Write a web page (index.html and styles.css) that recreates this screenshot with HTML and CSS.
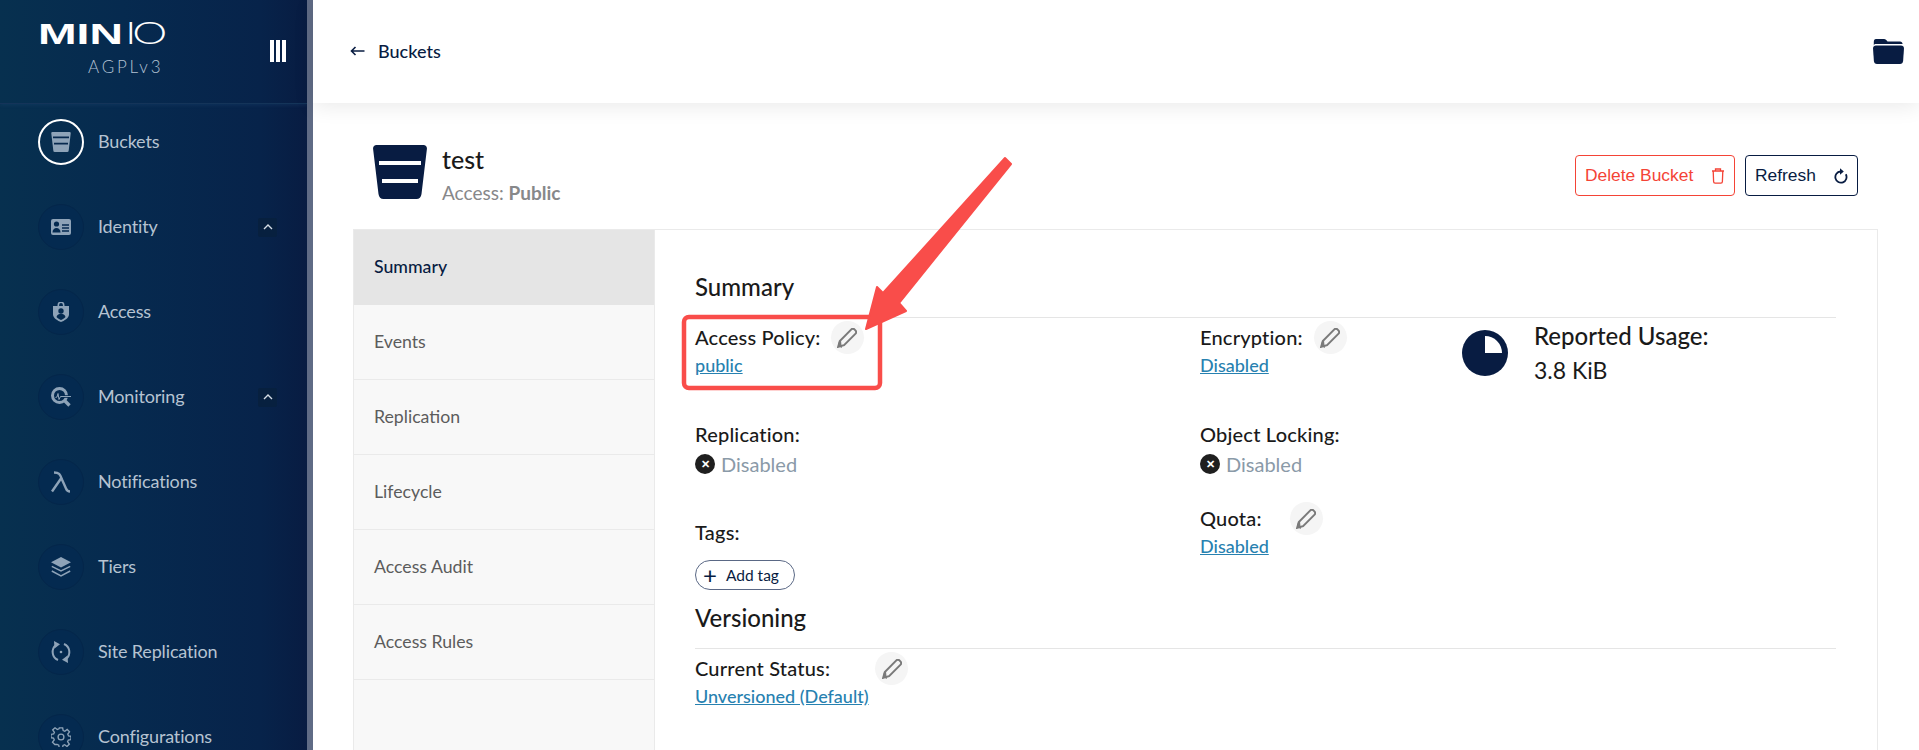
FILE: index.html
```html
<!DOCTYPE html>
<html lang="en">
<head>
<meta charset="utf-8">
<title>MinIO Console</title>
<link rel="stylesheet" href="styles.css">
</head>
<body>
<div class="app">
  <aside class="sidebar">
    <div class="brand">
      <div class="logo-block">
        <svg class="logo" width="138" height="38" viewBox="0 0 138 38"><text class="logo-a" x="3" y="30" textLength="85" lengthAdjust="spacingAndGlyphs">MIN</text><text class="logo-b" x="90" y="30" textLength="38" lengthAdjust="spacingAndGlyphs">IO</text></svg>
        <div class="license">AGPLv3</div>
      </div>
      <button class="collapse" aria-label="Collapse"><i></i><i></i><i></i></button>
    </div>
    <nav class="nav">
      <a class="nav-item active"><span class="nav-ico"><svg width="20" height="20" viewBox="0 0 20 20"><path class="ico-fill" d="M1.500 0h17a1.200 1.200 0 0 1 1.200 1.400l-2 17a1.600 1.600 0 0 1-1.600 1.600H3.900a1.600 1.600 0 0 1-1.600-1.600l-2-17A1.200 1.200 0 0 1 1.500 0z"/><path class="ico-cut" d="M2 5.400h16M3 11.600h14"/></svg></span><span class="nav-label">Buckets</span></a>
      <a class="nav-item"><span class="nav-ico"><svg width="20" height="16" viewBox="0 0 20 16"><path class="ico-fill" d="M2 0h16a2 2 0 0 1 2 2v12a2 2 0 0 1-2 2H2a2 2 0 0 1-2-2V2a2 2 0 0 1 2-2z"/><circle class="ico-dark" cx="5.500" cy="5" r="2.600"/><path class="ico-dark" d="M1.500 13.500c0-3 1.800-4.500 4-4.500s4 1.500 4 4.500z"/><path class="ico-cut2" d="M11 6h7M11 9h7M11 12h7"/></svg></span><span class="nav-label">Identity</span><span class="chev"><svg width="10" height="6" viewBox="0 0 10 6"><path d="M1 5l4-4 4 4"/></svg></span></a>
      <a class="nav-item"><span class="nav-ico"><svg width="16" height="20" viewBox="0 0 16 20"><path class="ico-fill" d="M4.500 4V3a3.500 3.500 0 0 1 7 0v1h-1.600V3a1.900 1.900 0 0 0-3.800 0v1zM0 4h16v8.500C16 16 11 19 8 20c-3-1-8-4-8-7.500z"/><circle class="ico-dark" cx="8" cy="9" r="2.700"/><path class="ico-dark" d="M3.500 15c.5-2.500 2.500-3.200 4.500-3.200s4 .7 4.500 3.200c-1.200 1.300-3 2.400-4.500 3-1.500-.6-3.300-1.700-4.500-3z"/></svg></span><span class="nav-label">Access</span></a>
      <a class="nav-item"><span class="nav-ico"><svg width="20" height="20" viewBox="0 0 20 20"><circle class="mon-ring" cx="8.500" cy="8.500" r="7"/><path class="mon-handle" d="M13.500 13.500l5 5"/><path class="mon-cut" d="M12 9.500h8"/><path class="mon-pulse" d="M4.500 10.500l1.500-.5 1-3.500 1 6 1.500-3h11"/></svg></span><span class="nav-label">Monitoring</span><span class="chev"><svg width="10" height="6" viewBox="0 0 10 6"><path d="M1 5l4-4 4 4"/></svg></span></a>
      <a class="nav-item"><span class="nav-ico"><svg width="20" height="22" viewBox="0 0 20 22"><path class="ico-line2" d="M3 1.500c5 0 6 1.500 8 7l4 9c.8 2 2 3 4 3M10 7.500L1 20.500"/></svg></span><span class="nav-label">Notifications</span></a>
      <a class="nav-item"><span class="nav-ico"><svg width="20" height="20" viewBox="0 0 20 20"><path class="ico-fill" d="M10 0l10 5.200L10 10.500 0 5.200z"/><path class="ico-line" d="M.8 9.400L10 14l9.200-4.600M.8 14L10 18.800 19.200 14"/></svg></span><span class="nav-label">Tiers</span></a>
      <a class="nav-item"><span class="nav-ico"><svg width="20" height="22" viewBox="0 0 20 22"><path class="ico-line3" d="M7 19A8.800 8.800 0 0 1 5 4M13 3A8.800 8.800 0 0 1 15 18"/><path class="ico-fill" d="M3 0l6 3.200-5.500 4.300zM17 22l-6-3.200 5.500-4.300z"/><circle class="ico-fill" cx="10" cy="11" r="1.300"/></svg></span><span class="nav-label">Site Replication</span></a>
      <a class="nav-item"><span class="nav-ico"><svg width="20" height="20" viewBox="0 0 24 24"><circle class="ico-line4" cx="12" cy="12" r="3.500"/><path class="ico-line4" d="M10 1h4l.6 3.200 2 .9L19.400 3l2.800 2.800-2.100 2.800.9 2 3 .5v4l-3.200.6-.9 2 2.100 2.800-2.800 2.800-2.800-2.100-2 .9-.5 3h-4l-.6-3.200-2-.9L4.600 21l-2.800-2.800 2.100-2.800-.9-2-3-.5v-4l3.200-.6.9-2L2 3.500l2.800-2.500 2.800 2.100 2-.9z"/></svg></span><span class="nav-label">Configurations</span></a>
    </nav>
  </aside>

  <main class="main">
    <header class="topbar">
      <a class="back"><svg width="15" height="10" viewBox="0 0 15 10"><path d="M14.500 5H2M5.500 1L1.500 5l4 4"/></svg><span>Buckets</span></a>
      <svg class="folder" width="31" height="25" viewBox="0 0 31 25"><path d="M3 0h8c1.500 0 2.500 1 3.500 2.500H27c1.500 0 2.500 1 2.600 2.500H2.500C1.600 5 1 5.600.8 6.500V3C.8 1 1.500 0 3 0z"/><path d="M3 6.500h25c1.800 0 3 1 3 3l-.9 12.500c-.2 2-1.300 3-3.100 3H4c-1.800 0-2.900-1-3.100-3L0 9.500c0-2 1.200-3 3-3z"/></svg>
    </header>

    <div class="page">
      <div class="title-row">
        <div class="title-left">
          <svg class="bucket" width="54" height="54" viewBox="0 0 54 54"><path class="bucket-body" d="M3.500 0h47c2.200 0 3.700 1.800 3.400 4l-5.400 45c-.3 3-2.300 5-5 5h-33c-2.700 0-4.700-2-5-5L.1 4C-.2 1.800 1.300 0 3.500 0z"/><path class="bucket-line" d="M6 18h42M9 36h36"/></svg>
          <div>
            <div class="bucket-name">test</div>
            <div class="bucket-access">Access: <b>Public</b></div>
          </div>
        </div>
        <div class="actions">
          <button class="btn btn-danger">Delete Bucket<svg width="14" height="16" viewBox="0 0 14 16"><path d="M1 3h12M4.500 3V1h5V3M2.200 3l.4 10.500c0 1 .6 1.700 1.500 1.700h5.800c.9 0 1.500-.7 1.500-1.700L11.800 3"/></svg></button>
          <button class="btn btn-plain">Refresh<svg width="14" height="16" viewBox="0 0 14 16"><path class="arc" d="M6.500 3.500a5.600 5.600 0 1 0 5.300 2.800"/><path class="tip" d="M6 .3v6.400l3.800-3.200z"/></svg></button>
        </div>
      </div>

      <section class="panel">
        <ul class="tabs">
          <li class="tab tab-active">Summary</li>
          <li class="tab">Events</li>
          <li class="tab">Replication</li>
          <li class="tab">Lifecycle</li>
          <li class="tab">Access Audit</li>
          <li class="tab">Access Rules</li>
        </ul>
        <div class="content">
          <h2 class="section-title">Summary</h2>
          <div class="summary-grid">
            <div class="col col-a">
              <div class="label-row"><span class="label">Access Policy:</span><span class="pencil gap-10"><svg width="20" height="20" viewBox="0 0 17 17"><path d="M12.200 1.200a1.800 1.800 0 0 1 2.600 0l1 1a1.800 1.800 0 0 1 0 2.600L6 14.600 1 16l1.400-5z"/><path class="lead" d="M3 15.200l-1.200-1.200.8-2.800z"/></svg></span></div>
              <a class="link">public</a>
              <div class="label mt-47">Replication:</div>
              <div class="status"><span class="x-ico">✕</span>Disabled</div>
              <div class="label mt-47">Tags:</div>
              <button class="pill"><span class="plus">+</span>Add tag</button>
            </div>
            <div class="col col-b">
              <div class="label-row"><span class="label">Encryption:</span><span class="pencil gap-11"><svg width="20" height="20" viewBox="0 0 17 17"><path d="M12.200 1.200a1.800 1.800 0 0 1 2.600 0l1 1a1.800 1.800 0 0 1 0 2.600L6 14.600 1 16l1.400-5z"/><path class="lead" d="M3 15.200l-1.200-1.200.8-2.800z"/></svg></span></div>
              <a class="link">Disabled</a>
              <div class="label mt-47">Object Locking:</div>
              <div class="status"><span class="x-ico">✕</span>Disabled</div>
              <div class="label-row mt-28"><span class="label">Quota:</span><span class="pencil gap-28"><svg width="20" height="20" viewBox="0 0 17 17"><path d="M12.200 1.200a1.800 1.800 0 0 1 2.600 0l1 1a1.800 1.800 0 0 1 0 2.600L6 14.600 1 16l1.400-5z"/><path class="lead" d="M3 15.200l-1.200-1.200.8-2.800z"/></svg></span></div>
              <a class="link">Disabled</a>
            </div>
            <div class="usage">
              <svg class="pie" width="46" height="46" viewBox="0 0 46 46"><circle class="pie-bg" cx="23" cy="23" r="23"/><path class="pie-cut" d="M23 6a17 17 0 0 1 17 17H23z"/></svg>
              <div>
                <div class="usage-title">Reported Usage:</div>
                <div class="usage-value">3.8 KiB</div>
              </div>
            </div>
          </div>
          <h2 class="section-title versioning">Versioning</h2>
          <div class="label-row after-rule"><span class="label">Current Status:</span><span class="pencil gap-45"><svg width="20" height="20" viewBox="0 0 17 17"><path d="M12.200 1.200a1.800 1.800 0 0 1 2.600 0l1 1a1.800 1.800 0 0 1 0 2.600L6 14.600 1 16l1.400-5z"/><path class="lead" d="M3 15.200l-1.200-1.200.8-2.800z"/></svg></span></div>
          <a class="link">Unversioned (Default)</a>
        </div>
      </section>
    </div>
  </main>
</div>

<svg class="annotation" width="1919" height="750" viewBox="0 0 1919 750">
  <rect class="ann-box" x="684" y="317" width="196" height="71" rx="5"/>
  <path class="ann-arrow" d="M1005 158l6 6-112 139 7 8-40 18 11-42 6 6z"/>
</svg>
</body>
</html>
```
FILE: styles.css
```css
* { box-sizing: border-box; }
html, body { margin: 0; height: 750px; overflow: hidden; background: #fff; }
body { font-family: Lato, "Noto Sans", sans-serif; color: #1a1a1a; }
a { cursor: pointer; }
button { font: inherit; background: none; cursor: pointer; }

.app { display: flex; height: 750px; }

/* sidebar */
.sidebar {
  width: 313px; flex: none; height: 750px; overflow: hidden;
  background: linear-gradient(90deg, #07304f 0, #062a4f 40%, #07234a 85%, #081c42 100%);
  background-size: 307px 100%; background-repeat: no-repeat;
  border-right: 6px solid #5f6b85;
}
.brand {
  height: 104px; display: flex; justify-content: space-between; align-items: flex-start;
  padding: 14px 21px 0 35px;
  border-bottom: 1px solid #143459;
  box-shadow: 0 2px 3px rgba(30, 70, 120, .25);
}
.logo { display: block; fill: #fff; }
.logo-a { font: 700 30px "Liberation Sans", sans-serif; }
.logo-b { font: 300 31px Lato, sans-serif; letter-spacing: -3px; }
.license { margin: 5px 0 0 53px; color: #b3c2d4; font-size: 17px; font-weight: 300; letter-spacing: 2.8px; line-height: 20px; }
.collapse { display: flex; gap: 2px; padding: 0; margin-top: 26px; border: 0; }
.collapse i { width: 4px; height: 22px; background: #fff; }

.nav { display: flex; flex-direction: column; gap: 39px; padding: 15px 0 0 38px; }
.nav-item { display: flex; align-items: center; height: 46px; }
.nav-ico {
  width: 46px; height: 46px; flex: none; border-radius: 50%;
  display: flex; align-items: center; justify-content: center;
  background: #042a50; border: 1px solid #04264a;
}
.nav-item.active .nav-ico { background: transparent; border: 2px solid #fff; }
.nav-label { margin-left: 14px; padding-bottom: 2px; font-size: 18px; color: #b6c3d2; letter-spacing: -.15px; }
.chev {
  width: 19px; height: 19px; margin-left: auto; margin-right: 30px; border-radius: 2px;
  background: #07203f; display: flex; align-items: center; justify-content: center;
}
.chev path { fill: none; stroke: #d5dde6; stroke-width: 1.4; }
.ico-fill { fill: #8ea3b8; }
.ico-cut { stroke: #07294e; stroke-width: 1.800; fill: none; }
.ico-cut2 { stroke: #042a50; stroke-width: 1.300; fill: none; }
.ico-dark { fill: #042a50; }
.ico-line { fill: none; stroke: #8ea3b8; stroke-width: 1.500; }
.ico-line2 { fill: none; stroke: #8ea3b8; stroke-width: 2.400; }
.ico-line3 { fill: none; stroke: #8ea3b8; stroke-width: 2; }
.ico-line4 { fill: none; stroke: #8ea3b8; stroke-width: 1.600; }
.mon-ring { fill: none; stroke: #8ea3b8; stroke-width: 3; }
.mon-handle { fill: none; stroke: #8ea3b8; stroke-width: 3.400; }
.mon-cut { fill: none; stroke: #042a50; stroke-width: 2.600; }
.mon-pulse { fill: none; stroke: #8ea3b8; stroke-width: 1; }

/* main */
.main { flex: 1; min-width: 0; display: flex; flex-direction: column; }
.topbar {
  height: 103px; flex: none; display: flex; align-items: center; justify-content: space-between;
  padding: 0 15px 0 37px; background: #fff; box-shadow: 0 3px 20px rgba(0, 0, 0, .09);
  position: relative;
}
.back { display: flex; align-items: center; gap: 13px; padding-bottom: 2px; font-size: 18px; color: #081c42; font-weight: 500; }
.back path { fill: none; stroke: #081c42; stroke-width: 1.600; }
.folder { fill: #081c42; }

.page { padding: 42px 41px 0 40px; }
.title-row { display: flex; justify-content: space-between; align-items: flex-start; padding: 0 20px; height: 84px; }
.title-left { display: flex; gap: 15px; }
.bucket-body { fill: #081c42; }
.bucket-line { stroke: #fff; stroke-width: 4; }
.bucket-name { font-size: 25px; line-height: 30px; margin-top: -1px; color: #1a1a1a; font-weight: 500; }
.bucket-access { font-size: 19px; line-height: 26px; margin-top: 6px; color: #87888a; }
.actions { display: flex; gap: 10px; margin-top: 10px; }
.btn {
  height: 41px; display: flex; align-items: center; border-radius: 4px; padding: 0 9px;
  font-family: "Liberation Sans", sans-serif; font-size: 17.4px; background: #fff;
}
.btn-danger { border: 1px solid #f44336; color: #f44336; width: 160px; justify-content: space-between; }
.btn-danger path { fill: none; stroke: #f44336; stroke-width: 1.300; }
.btn-plain { border: 1px solid #081c42; color: #081c42; width: 113px; justify-content: space-between; }
.arc { fill: none; stroke: #081c42; stroke-width: 1.800; }
.tip { fill: #081c42; }

.panel { display: flex; height: 560px; border: 1px solid #eaeaea; margin-top: 0; }
.tabs { width: 301px; flex: none; margin: 0; padding: 0; list-style: none; background: #f8f8f8; border-right: 1px solid #eaeaea; }
.tab { height: 75px; display: flex; align-items: center; padding: 0 0 2px 20px; font-size: 17.7px; color: #5c5c5c; border-bottom: 1px solid #eaeaea; }
.tab-active { background: #e5e5e5; color: #081c42; font-weight: 500; border-bottom: 0; }

.content { flex: 1; padding: 42px 41px 0 40px; }
.section-title { margin: 0; font-size: 24px; font-weight: 500; line-height: 30px; padding-bottom: 15px; border-bottom: 1px solid #e5e5e5; color: #1a1a1a; }
.summary-grid { display: flex; margin-top: 3px; height: 282px; }
.col { flex: none; }
.col-a { width: 505px; }
.col-b { width: 262px; }
.label-row { display: flex; align-items: center; height: 33px; }
.label { font-size: 20px; line-height: 22px; font-weight: 500; letter-spacing: .2px; color: #1a1a1a; }
.label-row .label { padding-bottom: 2px; line-height: 24px; }
.pencil { width: 33px; height: 33px; border-radius: 50%; background: #f5f5f5; display: flex; align-items: center; justify-content: center; }
.pencil path { fill: none; stroke: #7a7a7a; stroke-width: 1.700; }
.pencil path.lead { fill: #7a7a7a; }
.gap-10 { margin-left: 10px; }
.gap-11 { margin-left: 11px; }
.gap-28 { margin-left: 28px; }
.gap-45 { margin-left: 45px; }
.link { display: block; width: max-content; font-size: 18px; line-height: 22px; color: #2781b0; text-decoration: underline; font-weight: 500; }
.mt-47 { margin-top: 47px; }
.mt-28 { margin-top: 28px; }
.status { display: flex; align-items: center; gap: 6px; margin-top: 9px; height: 20px; font-size: 20px; color: #8a9aa8; }
.x-ico { width: 20px; height: 20px; border-radius: 50%; background: #1f1f1f; color: #fff; font-size: 11px; font-weight: 900; display: flex; align-items: center; justify-content: center; }
.pill { display: flex; align-items: center; margin-top: 17px; height: 30px; width: 100px; padding: 0 0 0 7px; border: 1px solid #5a6885; border-radius: 15px; font-size: 15.5px; color: #081c42; }
.plus { font-size: 24px; line-height: 20px; margin-right: 9px; font-weight: 400; }
.usage { display: flex; gap: 26px; margin-top: 9px; height: 46px; }
.pie-bg { fill: #081c42; }
.pie-cut { fill: #fff; }
.usage-title { font-size: 24px; line-height: 30px; margin-top: -9px; font-weight: 500; color: #1a1a1a; }
.usage-value { font-size: 23px; line-height: 30px; margin-top: 4px; color: #1a1a1a; }
.versioning { margin-top: 0; }
.after-rule { margin-top: 3px; }

/* screenshot annotation over the page */
.annotation { position: absolute; left: 0; top: 0; pointer-events: none; }
.ann-box { fill: none; stroke: #f94d4a; stroke-width: 4.500; }
.ann-arrow { fill: #f94d4a; stroke: #f94d4a; stroke-width: 2; stroke-linejoin: round; }
```
